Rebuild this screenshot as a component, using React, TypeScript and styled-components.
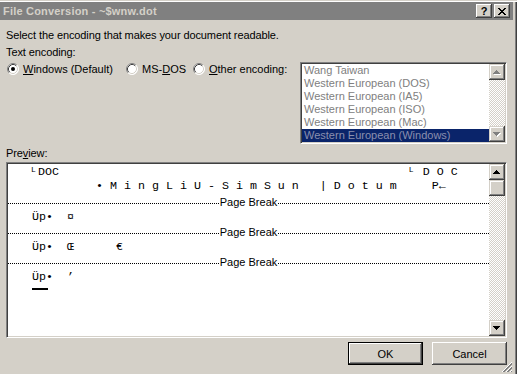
import React from 'react';
import styled, { createGlobalStyle } from 'styled-components';

const colors = {
  face: '#d4d0c8',
  shadow: '#808080',
  dark: '#404040',
  light: '#ffffff',
  select: '#0a246a',
  disabledText: '#808080',
  selectText: '#8a8fae',
};

const GlobalStyle = createGlobalStyle`
  html, body {
    margin: 0;
    padding: 0;
    background: ${colors.face};
  }
  body {
    font-family: 'Liberation Sans', Arial, sans-serif;
    font-size: 11px;
    color: #000;
  }
  * {
    box-sizing: border-box;
  }
`;

const Window = styled.div`
  position: relative;
  width: 517px;
  height: 374px;
  display: flex;
  flex-direction: column;
  padding: 2px 4px 0 0;
  background: ${colors.face};
  overflow: hidden;
  box-shadow: inset 0 1px ${colors.face}, inset 0 2px ${colors.light},
    inset -1px 0 ${colors.dark}, inset -2px 0 ${colors.shadow};
`;

const TitleBar = styled.div`
  height: 18px;
  display: flex;
  align-items: center;
  padding: 0 3px;
  background: ${colors.shadow};
  color: ${colors.face};
  font-weight: bold;
  font-size: 11px;
`;

const Title = styled.span`
  flex: 1;
  white-space: nowrap;
  letter-spacing: 0.2px;
`;

const TitleButtons = styled.div`
  display: flex;
  gap: 2px;
`;

const TitleButton = styled.div`
  width: 16px;
  height: 14px;
  display: flex;
  align-items: center;
  justify-content: center;
  background: ${colors.face};
  color: #000;
  font-size: 11px;
  font-weight: bold;
  box-shadow: inset -1px -1px ${colors.dark}, inset 1px 1px ${colors.light},
    inset -2px -2px ${colors.shadow};
`;

const Body = styled.div`
  flex: 1;
  display: flex;
  flex-direction: column;
  padding: 0 6px;
`;

const TextLine = styled.div<{ $top: number }>`
  margin-top: ${(p) => p.$top}px;
  line-height: 14px;
  white-space: nowrap;
  letter-spacing: -0.1px;
`;

const EncodingRow = styled.div`
  margin-top: 3px;
  display: flex;
  align-items: flex-start;
`;

const RadioGroup = styled.div`
  display: flex;
  align-items: center;
  height: 14px;
  padding-left: 1px;
`;

const Option = styled.label<{ $width?: number }>`
  display: flex;
  align-items: center;
  gap: 4px;
  width: ${(p) => (p.$width ? `${p.$width}px` : 'auto')};
  white-space: nowrap;
  line-height: 14px;
`;

const Key = styled.span`
  text-decoration: underline;
`;

const ListBox = styled.div`
  margin-left: auto;
  width: 207px;
  height: 82px;
  display: flex;
  background: #fff;
  border: 1px solid;
  border-color: ${colors.shadow} ${colors.light} ${colors.light} ${colors.shadow};
  box-shadow: inset 1px 1px ${colors.dark}, inset -1px -1px ${colors.face};
  padding: 1px;
`;

const ListItems = styled.div`
  flex: 1;
  display: flex;
  flex-direction: column;
`;

const ListItem = styled.div<{ $selected?: boolean }>`
  height: 13px;
  line-height: 13px;
  padding-left: 2px;
  white-space: nowrap;
  color: ${(p) => (p.$selected ? colors.selectText : colors.disabledText)};
  background: ${(p) => (p.$selected ? colors.select : 'transparent')};
`;

const ScrollBar = styled.div`
  width: 16px;
  display: flex;
  flex-direction: column;
`;

const ScrollButton = styled.div`
  width: 16px;
  height: 16px;
  flex: none;
  display: flex;
  align-items: center;
  justify-content: center;
  background: ${colors.face};
  box-shadow: inset -1px -1px ${colors.dark}, inset 1px 1px ${colors.face},
    inset -2px -2px ${colors.shadow}, inset 2px 2px ${colors.light};
`;

const Track = styled.div`
  flex: 1;
  background-color: ${colors.face};
  background-image: conic-gradient(
    #fff 25%,
    ${colors.face} 0 50%,
    #fff 0 75%,
    ${colors.face} 0
  );
  background-size: 2px 2px;
`;

const PreviewBox = styled.div`
  margin-top: 2px;
  height: 176px;
  display: flex;
  background: #fff;
  border: 1px solid;
  border-color: ${colors.shadow} ${colors.light} ${colors.light} ${colors.shadow};
  box-shadow: inset 1px 1px ${colors.dark}, inset -1px -1px ${colors.face};
  padding: 1px;
`;

const PreviewContent = styled.div`
  flex: 1;
  display: flex;
  flex-direction: column;
  padding-top: 1px;
  overflow: hidden;
`;

const DocLine = styled.div<{ $indent: number }>`
  height: 14px;
  line-height: 14px;
  padding-left: ${(p) => p.$indent}px;
  font-family: 'Liberation Mono', 'Courier New', monospace;
  font-size: 11.67px;
  white-space: pre;
`;

const Corner = styled.span`
  display: inline-block;
  width: 7px;
  font-size: 8px;
  vertical-align: 3px;
  line-height: 8px;
`;

const PageBreak = styled.div<{ $top?: number }>`
  height: 16px;
  margin-top: ${(p) => p.$top ?? 0}px;
  display: flex;
  align-items: center;
  font-size: 11px;
`;

const DottedRule = styled.div`
  flex: 1;
  height: 0;
  margin-top: 2px;
  border-top: 1px dotted #000;
`;

const BreakLabel = styled.span`
  padding: 0 1px;
  line-height: 16px;
`;

const Caret = styled.div`
  width: 16px;
  height: 2px;
  margin: 4px 0 0 24px;
  background: #000;
`;

const Footer = styled.div`
  margin-top: 4px;
  display: flex;
  justify-content: flex-end;
  gap: 9px;
`;

const Button = styled.button<{ $default?: boolean }>`
  width: 75px;
  height: 23px;
  padding: 0;
  font-family: 'Liberation Sans', Arial, sans-serif;
  font-size: 11px;
  color: #000;
  background: ${colors.face};
  border: ${(p) => (p.$default ? '1px solid #000' : 'none')};
  box-shadow: inset -1px -1px ${colors.dark}, inset 1px 1px ${colors.light},
    inset -2px -2px ${colors.shadow};
`;

const Grip = styled.svg`
  position: absolute;
  right: 4px;
  bottom: 1px;
`;

const UpArrow = ({ disabled }: { disabled?: boolean }) => (
  <svg width="8" height="5" viewBox="0 0 8 5" shapeRendering="crispEdges">
    {disabled && (
      <path d="M4 1h1v1h1v1h1v1h1v1H1V4h1V3h1V2h1z" fill="#fff" />
    )}
    <path
      d="M3 0h1v1h1v1h1v1h1v1H0V3h1V2h1V1h1z"
      fill={disabled ? colors.shadow : '#000'}
    />
  </svg>
);

const DownArrow = ({ disabled }: { disabled?: boolean }) => (
  <svg width="8" height="5" viewBox="0 0 8 5" shapeRendering="crispEdges">
    {disabled && <path d="M1 1h7v1H7v1H6v1H5v1H4V4H3V3H2V2H1z" fill="#fff" />}
    <path
      d="M0 0h7v1H6v1H5v1H4v1H3V3H2V2H1V1H0z"
      fill={disabled ? colors.shadow : '#000'}
    />
  </svg>
);

const CloseGlyph = () => (
  <svg width="8" height="7" viewBox="0 0 8 7" shapeRendering="crispEdges">
    <path
      d="M0 0h2v1H0z M6 0h2v1H6z M1 1h2v1H1z M5 1h2v1H5z M2 2h4v1H2z M3 3h2v1H3z M2 4h4v1H2z M1 5h2v1H1z M5 5h2v1H5z M0 6h2v1H0z M6 6h2v1H6z"
      fill="#000"
    />
  </svg>
);

const Radio = ({ checked }: { checked?: boolean }) => (
  <svg width="12" height="12" viewBox="0 0 12 12">
    <circle cx="6" cy="6" r="5.5" fill="#fff" />
    <path d="M2.11 9.89 A5.5 5.5 0 0 1 9.89 2.11" stroke={colors.shadow} fill="none" />
    <path d="M9.89 2.11 A5.5 5.5 0 0 1 2.11 9.89" stroke="#fff" fill="none" />
    <path d="M2.82 9.18 A4.5 4.5 0 0 1 9.18 2.82" stroke={colors.dark} fill="none" />
    <path d="M9.18 2.82 A4.5 4.5 0 0 1 2.82 9.18" stroke={colors.face} fill="none" />
    {checked && <circle cx="6" cy="6" r="2" fill="#000" />}
  </svg>
);

const encodings = [
  'Wang Taiwan',
  'Western European (DOS)',
  'Western European (IA5)',
  'Western European (ISO)',
  'Western European (Mac)',
  'Western European (Windows)',
];

const PageBreakRow = ({ top }: { top?: number }) => (
  <PageBreak $top={top}>
    <DottedRule />
    <BreakLabel>Page Break</BreakLabel>
    <DottedRule />
  </PageBreak>
);

const App: React.FC = () => {
  return (
    <>
      <GlobalStyle />
      <Window>
        <TitleBar>
          <Title>File Conversion - ~$wnw.dot</Title>
          <TitleButtons>
            <TitleButton>?</TitleButton>
            <TitleButton>
              <CloseGlyph />
            </TitleButton>
          </TitleButtons>
        </TitleBar>

        <Body>
          <TextLine $top={8}>Select the encoding that makes your document readable.</TextLine>
          <TextLine $top={3}>Text encoding:</TextLine>

          <EncodingRow>
            <RadioGroup>
              <Option $width={119}>
                <Radio checked />
                <span>
                  <Key>W</Key>indows (Default)
                </span>
              </Option>
              <Option $width={67}>
                <Radio />
                <span>
                  MS-<Key>D</Key>OS
                </span>
              </Option>
              <Option>
                <Radio />
                <span>
                  <Key>O</Key>ther encoding:
                </span>
              </Option>
            </RadioGroup>

            <ListBox>
              <ListItems>
                {encodings.map((name, i) => (
                  <ListItem key={name} $selected={i === encodings.length - 1}>
                    {name}
                  </ListItem>
                ))}
              </ListItems>
              <ScrollBar>
                <ScrollButton>
                  <UpArrow disabled />
                </ScrollButton>
                <Track />
                <ScrollButton>
                  <DownArrow disabled />
                </ScrollButton>
              </ScrollBar>
            </ListBox>
          </EncodingRow>

          <TextLine $top={2}>
            Pre<Key>v</Key>iew:
          </TextLine>

          <PreviewBox>
            <PreviewContent>
              <DocLine $indent={23}>
                <Corner>L</Corner>
                {'DOC' + ' '.repeat(50)}
                <Corner>L</Corner>
                {' D O C'}
              </DocLine>
              <DocLine $indent={88}>
                {'• M i n g L i U - S i m S u n   | D o t u m     P←'}
              </DocLine>
              <PageBreakRow top={1} />
              <DocLine $indent={24}>{'Üp•  ¤'}</DocLine>
              <PageBreakRow />
              <DocLine $indent={24}>{'Üp•  Œ      €'}</DocLine>
              <PageBreakRow />
              <DocLine $indent={24}>{'Üp•  ’'}</DocLine>
              <Caret />
            </PreviewContent>
            <ScrollBar>
              <ScrollButton>
                <UpArrow />
              </ScrollButton>
              <ScrollButton />
              <Track />
              <ScrollButton>
                <DownArrow />
              </ScrollButton>
            </ScrollBar>
          </PreviewBox>

          <Footer>
            <Button $default>OK</Button>
            <Button>Cancel</Button>
          </Footer>
        </Body>

        <Grip width="12" height="12" viewBox="0 0 12 12" shapeRendering="crispEdges">
          <path d="M11 1 L1 11 M11 5 L5 11 M11 9 L9 11" stroke="#fff" />
          <path d="M11 2 L2 11 M11 3 L3 11 M11 6 L6 11 M11 7 L7 11 M11 10 L10 11" stroke={colors.shadow} />
        </Grip>
      </Window>
    </>
  );
};

export default App;
